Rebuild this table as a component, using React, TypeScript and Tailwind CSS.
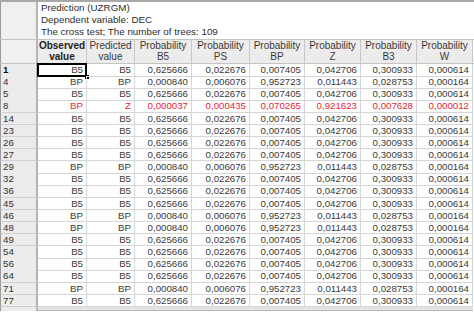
const cols = "grid grid-cols-[38px_49px_48px_57px_58px_55px_56px_56px_56px]";

const b5 = ["B5", "B5", "0,625666", "0,022676", "0,007405", "0,042706", "0,300933", "0,000614"];
const bp = ["BP", "BP", "0,000840", "0,006076", "0,952723", "0,011443", "0,028753", "0,000164"];
const miss = ["BP", "Z", "0,000037", "0,000435", "0,070265", "0,921623", "0,007628", "0,000012"];

const rows: { id: string; cells: string[]; red?: boolean }[] = [
    { id: "1", cells: b5 },
    { id: "4", cells: bp },
    { id: "5", cells: b5 },
    { id: "8", cells: miss, red: true },
    { id: "14", cells: b5 },
    { id: "23", cells: b5 },
    { id: "26", cells: b5 },
    { id: "27", cells: b5 },
    { id: "29", cells: bp },
    { id: "32", cells: b5 },
    { id: "36", cells: b5 },
    { id: "45", cells: b5 },
    { id: "46", cells: bp },
    { id: "48", cells: bp },
    { id: "49", cells: b5 },
    { id: "54", cells: b5 },
    { id: "56", cells: b5 },
    { id: "64", cells: b5 },
    { id: "71", cells: bp },
    { id: "77", cells: b5 },
];

const headers = [
    ["Observed", "value"],
    ["Predicted", "value"],
    ["Probability", "B5"],
    ["Probability", "PS"],
    ["Probability", "BP"],
    ["Probability", "Z"],
    ["Probability", "B3"],
    ["Probability", "W"],
];

export default function App() {
    return (
        <div className="w-[474px] h-[315px] overflow-hidden bg-white text-[#333] font-['Liberation_Sans',Arial,sans-serif] text-[9.7px]">
            <div className="h-[2px] bg-[#a8a8a8]" />

            {/* title block */}
            <div className="flex h-[37px]">
                <div className="w-[38px] bg-[#f0f0f0] border-r-[2px] border-[#b4b4b4] border-l border-l-[#9a9a9a]" />
                <div className="flex-1 pl-[3px] leading-[12px] text-[9.8px] text-[#2e2e2e]">
                    <div>Prediction (UZRGM)</div>
                    <div>Dependent variable: DEC</div>
                    <div>The cross test; The number of trees: 109</div>
                </div>
            </div>

            {/* column headers */}
            <div className={`${cols} h-[25px] border-t border-b border-[#c4c4c4]`}>
                <div className="bg-[#f0f0f0] border-r-[2px] border-[#b4b4b4] border-l border-l-[#9a9a9a]" />
                {headers.map((h, i) => (
                    <div
                        key={i}
                        className={`flex flex-col items-center justify-center bg-[#ececec] border-r border-[#c8c8c8] leading-[10.5px] text-[10px] ${i === 0 ? "font-bold text-[#222]" : "text-[#3a3a3a]"}`}
                    >
                        <span>{h[0]}</span>
                        <span>{h[1]}</span>
                    </div>
                ))}
            </div>

            {/* data rows */}
            {rows.map((r, ri) => (
                <div key={r.id} className={`${cols} h-[12.15px] leading-[11.5px]`}>
                    <div
                        className={`bg-[#ececec] border-b border-[#d0d0d0] border-r-[2px] border-r-[#b4b4b4] border-l border-l-[#9a9a9a] pl-[2px] ${ri === 0 ? "font-bold text-[#111]" : "text-[#333]"}`}
                    >
                        {r.id}
                    </div>
                    {r.cells.map((c, ci) => (
                        <div
                            key={ci}
                            className={`relative text-right pr-[3px] border-b border-r border-[#d6d6d6] ${r.red ? "text-[#e0283a]" : "text-[#3a3a3a]"}`}
                        >
                            {c}
                            {ri === 0 && ci === 0 && (
                                <>
                                    <div className="absolute -left-[1px] -top-[1px] w-[50px] h-[14px] border-[2px] border-black" />
                                    <div className="absolute -right-[3px] -bottom-[3px] w-[4px] h-[4px] bg-black" />
                                </>
                            )}
                        </div>
                    ))}
                </div>
            ))}

            <div className={cols}>
                <div className="h-[4px] bg-[#ececec] border-r-[2px] border-[#b4b4b4] border-l border-l-[#9a9a9a]" />
                <div className="col-span-8 h-[4px] bg-[#e4e4e4] border-b border-[#b8b8b8]" />
            </div>
        </div>
    );
}
